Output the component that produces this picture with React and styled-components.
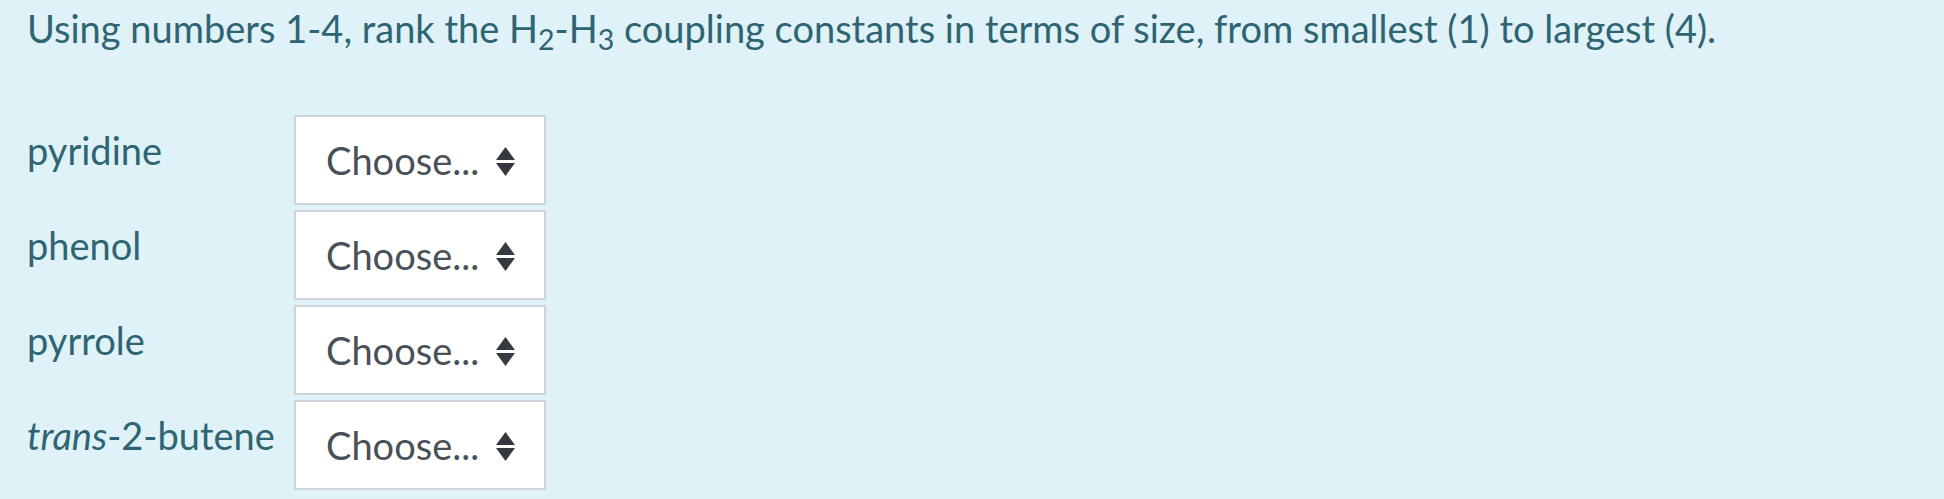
import React from "react"
import styled, { createGlobalStyle } from "styled-components"

const GlobalStyle = createGlobalStyle`
  html, body {
    margin: 0;
    padding: 0;
    background: #def2f8;
  }
  body {
    font-family: Lato, "Open Sans", sans-serif;
  }
`

const items = [
  { key: "pyridine", label: "pyridine" },
  { key: "phenol", label: "phenol" },
  { key: "pyrrole", label: "pyrrole" },
  {
    key: "butene",
    label: (
      <>
        <em>trans</em>-2-butene
      </>
    ),
  },
]

const ArrowIcon = () => (
  <Arrow width="19" height="29" viewBox="0 0 19 29" aria-hidden="true">
    <polygon points="9.5,0 0,13 19,13" />
    <polygon points="0,16 19,16 9.5,29" />
  </Arrow>
)

const App = () => (
  <>
    <GlobalStyle />
    <Formulation>
      <QText>
        Using numbers 1-4, rank the H<sub>2</sub>-H<sub>3</sub> coupling
        constants in terms of size, from smallest (1) to largest (4).
      </QText>
      <Answers>
        {items.map(({ key, label }) => (
          <Row key={key}>
            <Label htmlFor={`menu-${key}`}>{label}</Label>
            <SelectWrap>
              <Select id={`menu-${key}`} defaultValue="">
                <option value="">Choose...</option>
                <option value="1">1</option>
                <option value="2">2</option>
                <option value="3">3</option>
                <option value="4">4</option>
              </Select>
              <ArrowIcon />
            </SelectWrap>
          </Row>
        ))}
      </Answers>
    </Formulation>
  </>
)

export default App

const Formulation = styled.div`
  min-height: 499px;
  box-sizing: border-box;
  padding: 0 0 0 27px;
  background: #def2f8;
  color: #2f6473;
  font-size: 38px;
  line-height: 1.5;
`

const QText = styled.p`
  margin: 0 0 58px;
  white-space: nowrap;

  sub {
    font-size: 75%;
    line-height: 0;
    position: relative;
    vertical-align: baseline;
    bottom: -0.25em;
  }
`

const Answers = styled.div`
  display: flex;
  flex-direction: column;
  gap: 5px;
`

const Row = styled.div`
  display: grid;
  grid-template-columns: 267px 252px;
  align-items: start;
`

const Label = styled.label`
  padding-top: 7px;
  white-space: nowrap;

  em {
    font-style: italic;
  }
`

const SelectWrap = styled.div`
  position: relative;
  width: 252px;
  height: 90px;
`

const Select = styled.select`
  appearance: none;
  box-sizing: border-box;
  width: 100%;
  height: 100%;
  margin: 0;
  padding: 0 60px 0 30px;
  border: 2px solid #ced4da;
  border-radius: 0;
  background: #fff;
  color: #495057;
  font-family: inherit;
  font-size: 38px;
  outline: none;
`

const Arrow = styled.svg`
  position: absolute;
  right: 31px;
  top: 32px;
  fill: #343a40;
  pointer-events: none;
`
